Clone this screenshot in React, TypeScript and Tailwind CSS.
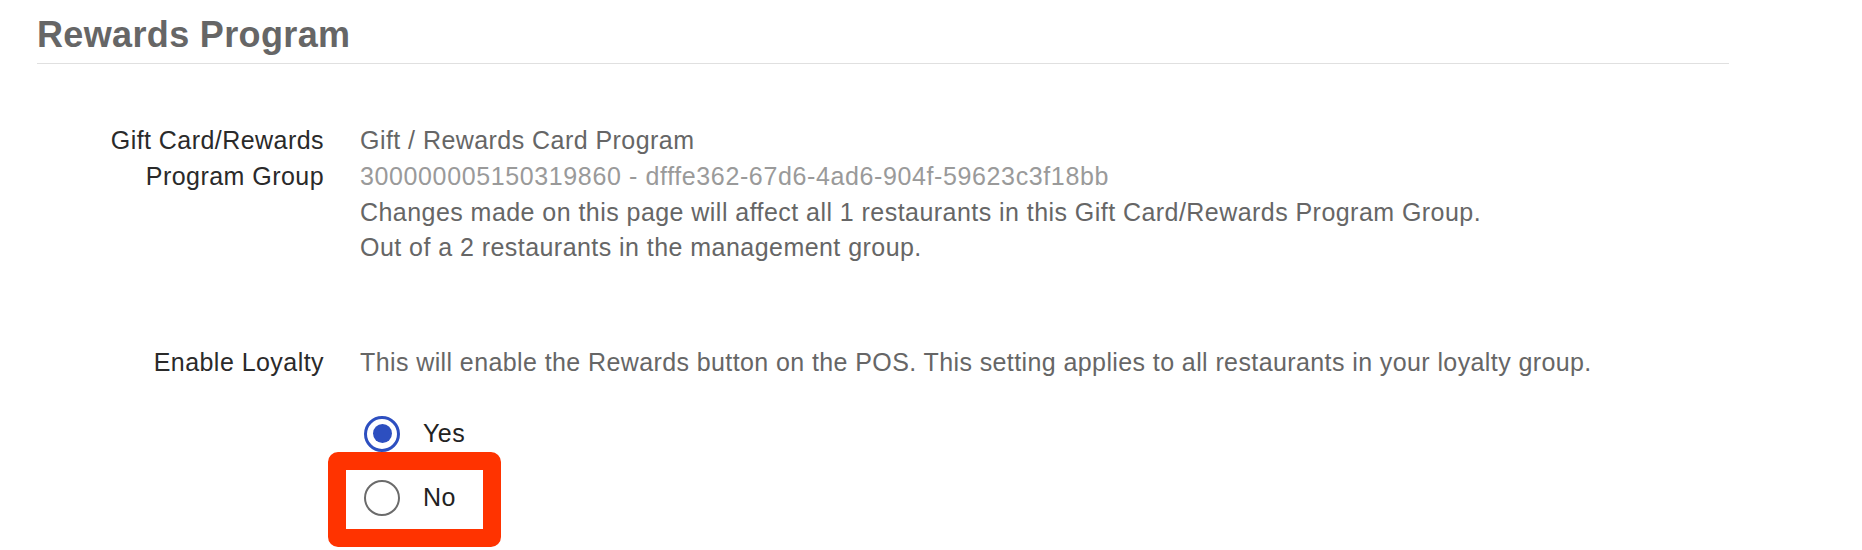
import React from "react";

function Radio({ checked, label }: { checked: boolean; label: string }) {
  return (
    <label className="flex items-center h-[36px] pl-[4px]">
      {checked ? (
        <span className="flex items-center justify-center w-[36px] h-[36px] rounded-full border-[3px] border-[#2d4fc0]">
          <span className="w-[19px] h-[19px] rounded-full bg-[#2d4fc0]" />
        </span>
      ) : (
        <span className="w-[36px] h-[36px] rounded-full border-2 border-[#6b6b6b]" />
      )}
      <span className="ml-[23px] text-[#222]">{label}</span>
    </label>
  );
}

export default function App() {
  return (
    <div className="relative w-[1862px] h-[550px] overflow-hidden bg-white font-['Liberation_Sans',Arial,sans-serif] text-[25px] leading-[35.8px] tracking-[0.45px]">
      <div className="pl-[37px] w-[1729px]">
        <h2 className="pt-[13px] pb-[6px] text-[36px] leading-[44px] font-bold tracking-[0.35px] text-[#666] border-b border-[#e0e0e0]">
          Rewards Program
        </h2>
      </div>

      <div className="flex mt-[59px] pl-[37px]">
        <div className="w-[287px] shrink-0 text-right text-[#2a2a2a]">
          Gift Card/Rewards
          <br />
          Program Group
        </div>
        <div className="ml-[36px] text-[#666]">
          <div>Gift / Rewards Card Program</div>
          <div className="text-[#9a9a9a] tracking-[0.62px]">300000005150319860 - dfffe362-67d6-4ad6-904f-59623c3f18bb</div>
          <div>Changes made on this page will affect all 1 restaurants in this Gift Card/Rewards Program Group.</div>
          <div>Out of a 2 restaurants in the management group.</div>
        </div>
      </div>

      <div className="flex mt-[79px] pl-[37px]">
        <div className="w-[287px] shrink-0 text-right text-[#2a2a2a]">Enable Loyalty</div>
        <div className="ml-[36px]">
          <div className="text-[#666] tracking-[0.4px]">
            This will enable the Rewards button on the POS. This setting applies to all restaurants in your loyalty group.
          </div>
          <div className="mt-[35px] flex flex-col gap-[28px]">
            <Radio checked label="Yes" />
            <Radio checked={false} label="No" />
          </div>
        </div>
      </div>

      {/* annotation highlight */}
      <div className="absolute left-[328px] top-[452px] w-[173px] h-[95px] border-[18px] border-[#ff3300] rounded-[10px]" />
    </div>
  );
}
